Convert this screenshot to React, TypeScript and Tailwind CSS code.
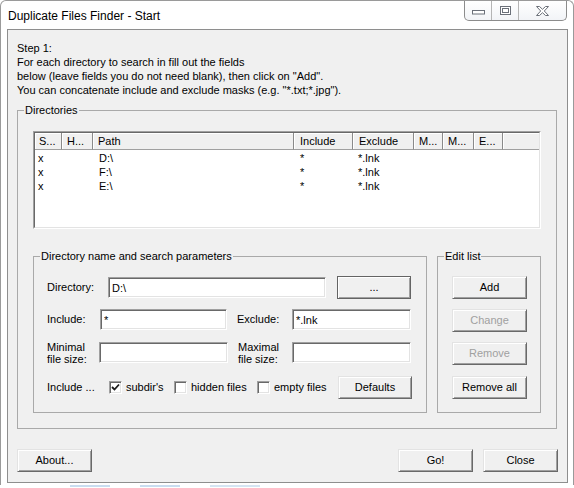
import type { ReactNode } from 'react'

const raisedBtn =
  'border border-t-[#e3e3e3] border-l-[#e3e3e3] border-r-[#696969] border-b-[#696969] shadow-[inset_1px_1px_0_#fff,inset_-1px_-1px_0_#a0a0a0]'
const defaultBtn =
  'border border-[#646464] shadow-[inset_1px_1px_0_#fff,inset_-1px_-1px_0_#a0a0a0]'
const sunken =
  'border border-t-[#a0a0a0] border-l-[#a0a0a0] border-r-white border-b-white shadow-[inset_1px_1px_0_#696969,inset_-1px_-1px_0_#e3e3e3]'

function Btn({
  children,
  className = '',
  disabled = false,
  isDefault = false,
}: {
  children: ReactNode
  className?: string
  disabled?: boolean
  isDefault?: boolean
}) {
  return (
    <button
      type="button"
      disabled={disabled}
      className={`flex h-[23px] shrink-0 items-center justify-center bg-[#f0f0f0] text-[11px] ${
        disabled ? 'text-[#a0a0a0]' : 'text-black'
      } ${isDefault ? defaultBtn : raisedBtn} ${className}`}
    >
      {children}
    </button>
  )
}

function Field({ value = '', className = '' }: { value?: string; className?: string }) {
  return (
    <input
      readOnly
      value={value}
      className={`h-[21px] shrink-0 bg-white pl-[3px] text-[11px] text-black outline-none ${sunken} ${className}`}
    />
  )
}

function Check({ checked, label }: { checked: boolean; label: string }) {
  return (
    <div className="flex items-center gap-[4px]">
      <span className={`flex h-[13px] w-[13px] items-center justify-center bg-white ${sunken}`}>
        {checked && (
          <svg width="9" height="9" viewBox="0 0 9 9">
            <path d="M1 4 L3.5 6.5 L8 1.5" fill="none" stroke="#1a1a1a" strokeWidth="1.8" />
          </svg>
        )}
      </span>
      <span>{label}</span>
    </div>
  )
}

// fieldset gives the etched group box; padding lives on the inner div so the legend stays put
function Group({
  title,
  className = '',
  inner = '',
  children,
}: {
  title: string
  className?: string
  inner?: string
  children: ReactNode
}) {
  return (
    <fieldset className={`border border-[#a9a9a9] ${className}`}>
      <legend className="ml-[6px] px-[1px] leading-[14px]">{title}</legend>
      <div className={inner}>{children}</div>
    </fieldset>
  )
}

const columns = [
  { label: 'S...', w: 'w-[27px] pl-[4px]' },
  { label: 'H...', w: 'w-[31px] pl-[5px]' },
  { label: 'Path', w: 'w-[201px] pl-[5px]' },
  { label: 'Include', w: 'w-[59px] pl-[6px]' },
  { label: 'Exclude', w: 'w-[61px] pl-[6px]' },
  { label: 'M...', w: 'w-[29px] pl-[5px]' },
  { label: 'M...', w: 'w-[31px] pl-[5px]' },
  { label: 'E...', w: 'w-[29px] pl-[5px]' },
]

const rows = [
  { s: 'x', path: 'D:\\', inc: '*', exc: '*.lnk' },
  { s: 'x', path: 'F:\\', inc: '*', exc: '*.lnk' },
  { s: 'x', path: 'E:\\', inc: '*', exc: '*.lnk' },
]

function CaptionButtons() {
  return (
    <div className="mr-[6px] flex h-[20px] overflow-hidden rounded-b-[5px] border border-t-0 border-[#8c8c8c] bg-gradient-to-b from-white to-[#f2f4f7]">
      <div className="flex w-[27px] items-start justify-center border-r border-[#b5b5b5] pt-[9px]">
        <svg width="13" height="5" viewBox="0 0 13 5">
          <rect x="0.5" y="0.5" width="12" height="3.5" fill="#fff" stroke="#6b7079" />
        </svg>
      </div>
      <div className="flex w-[27px] items-start justify-center border-r border-[#b5b5b5] pt-[5px]">
        <svg width="11" height="9" viewBox="0 0 11 9">
          <rect x="0.5" y="0.5" width="10" height="8" fill="#fff" stroke="#6b7079" />
          <rect x="2.5" y="2.5" width="6" height="4" fill="#fff" stroke="#6b7079" />
        </svg>
      </div>
      <div className="flex w-[47px] items-start justify-center pt-[5px]">
        <svg width="13" height="10" viewBox="0 0 13 10">
          <path
            d="M0.5 0.5 H3.5 L6.5 3.3 L9.5 0.5 H12.5 L8.3 5 L12.5 9.5 H9.5 L6.5 6.7 L3.5 9.5 H0.5 L4.7 5 Z"
            fill="#fff"
            stroke="#6b7079"
          />
        </svg>
      </div>
    </div>
  )
}

export default function App() {
  return (
    <div className="relative h-[488px] w-[574px] overflow-hidden bg-white text-[11px] text-black [font-family:'Liberation_Sans',Arial,sans-serif]">
      <div className="h-[485px] rounded-t-[6px] border border-b-0 border-[#9a9a9a] bg-white">
        {/* title bar */}
        <div className="flex h-[28px] items-start justify-between">
          <div className="pl-[7px] pt-[8px] text-[12px] leading-[14px] text-black">
            Duplicate Files Finder - Start
          </div>
          <CaptionButtons />
        </div>

        {/* client area */}
        <div className="ml-[6px] flex h-[454px] w-[561px] flex-col border border-[#8e8e8e] bg-[#f0f0f0]">
          <div className="ml-[9px] mt-[11px] leading-[14px]">
            <p>Step 1:</p>
            <p>For each directory to search in fill out the fields</p>
            <p>below (leave fields you do not need blank), then click on "Add".</p>
            <p>You can concatenate include and exclude masks (e.g. "*.txt;*.jpg").</p>
          </div>

          <Group title="Directories" className="ml-[9px] mt-[6px] w-[540px]" inner="px-[15px] pb-[15px] pt-[14px]">
            {/* list view */}
            <div className="h-[98px] border border-t-[#a0a0a0] border-l-[#a0a0a0] border-r-white border-b-white">
              <div className="h-full border border-t-[#696969] border-l-[#696969] border-r-[#e3e3e3] border-b-[#e3e3e3] bg-white">
                <div className="flex h-[17px] bg-[#f0f0f0]">
                  {columns.map((c, i) => (
                    <div
                      key={i}
                      className={`flex items-center border-b border-r border-b-[#a0a0a0] border-r-[#8a8a8a] shadow-[inset_1px_1px_0_#fff] ${c.w}`}
                    >
                      {c.label}
                    </div>
                  ))}
                  <div className="flex-1 border-b border-[#a0a0a0] shadow-[inset_1px_1px_0_#fff]" />
                </div>
                <div className="pt-[1px]">
                  {rows.map((r, i) => (
                    <div key={i} className="flex h-[14px] items-center leading-[14px]">
                      <div className="w-[27px] pl-[3px]">{r.s}</div>
                      <div className="w-[31px]" />
                      <div className="w-[201px] pl-[6px]">{r.path}</div>
                      <div className="w-[59px] pl-[6px]">{r.inc}</div>
                      <div className="w-[61px] pl-[5px]">{r.exc}</div>
                    </div>
                  ))}
                </div>
              </div>
            </div>

            <div className="mt-[20px] flex gap-[10px]">
              <Group
                title="Directory name and search parameters"
                className="w-[394px]"
                inner="pb-[13px] pl-[13px] pt-[13px]"
              >
                <div className="flex h-[23px] items-center">
                  <span className="w-[61px]">Directory:</span>
                  <Field value="D:\" className="w-[218px]" />
                  <Btn isDefault className="ml-[11px] w-[74px]">
                    ...
                  </Btn>
                </div>
                <div className="mt-[10px] flex h-[21px] items-center">
                  <span className="w-[53px]">Include:</span>
                  <Field value="*" className="w-[127px]" />
                  <span className="ml-[10px] w-[55px]">Exclude:</span>
                  <Field value="*.lnk" className="w-[119px]" />
                </div>
                <div className="mt-[12px] flex h-[21px] items-center">
                  <span className="w-[52px] leading-[12px]">
                    Minimal
                    <br />
                    file size:
                  </span>
                  <Field className="w-[129px]" />
                  <span className="ml-[10px] w-[54px] leading-[12px]">
                    Maximal
                    <br />
                    file size:
                  </span>
                  <Field className="w-[119px]" />
                </div>
                <div className="mt-[13px] flex h-[23px] items-center">
                  <span className="w-[62px]">Include ...</span>
                  <div className="flex w-[65px]">
                    <Check checked label="subdir's" />
                  </div>
                  <div className="flex w-[83px]">
                    <Check checked={false} label="hidden files" />
                  </div>
                  <Check checked={false} label="empty files" />
                  <Btn className="ml-auto mr-[14px] w-[74px]">Defaults</Btn>
                </div>
              </Group>

              <Group title="Edit list" className="flex-1" inner="flex flex-col pl-[14px] pt-[13px]">
                <Btn className="w-[75px]">Add</Btn>
                <Btn disabled className="mt-[10px] w-[75px]">
                  Change
                </Btn>
                <Btn disabled className="mt-[10px] w-[75px]">
                  Remove
                </Btn>
                <Btn className="mt-[11px] w-[75px]">Remove all</Btn>
              </Group>
            </div>
          </Group>

          <div className="ml-[9px] mt-[20px] flex w-[541px]">
            <Btn className="w-[75px]">About...</Btn>
            <Btn className="ml-auto w-[75px]">Go!</Btn>
            <Btn className="ml-[10px] w-[75px]">Close</Btn>
          </div>
        </div>
      </div>
      <div className="flex h-[3px] gap-[30px] pl-[70px]">
        <span className="h-[2px] w-[40px] bg-[#c9dcef]" />
        <span className="h-[2px] w-[40px] bg-[#c9dcef]" />
        <span className="h-[2px] w-[50px] bg-[#d5e4f2]" />
      </div>
    </div>
  )
}
